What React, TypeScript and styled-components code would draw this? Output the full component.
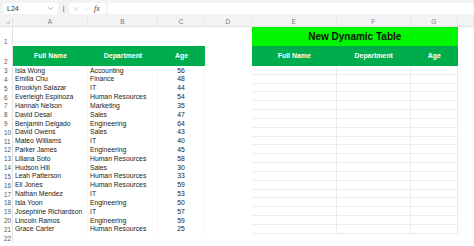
import React from "react";
import styled, { createGlobalStyle } from "styled-components";
import { ChevronDown, X, Check, EllipsisVertical } from "lucide-react";

const GlobalStyle = createGlobalStyle`
  html, body { margin: 0; padding: 0; background: #ffffff; overflow: hidden; }
  body { font-family: "Liberation Sans", Arial, sans-serif; }
  * { box-sizing: border-box; }
`;

const Page = styled.div`
  width: 474px;
  height: 246px;
  display: flex;
  flex-direction: column;
  overflow: hidden;
`;

const FormulaBar = styled.div`
  height: 17px;
  flex: none;
  background: #f3f3f3;
  display: flex;
  align-items: flex-start;
  padding: 3px 0 0 3px;
  gap: 2px;
`;

const Box = styled.div<{ $w?: number; $grow?: boolean }>`
  height: 11px;
  background: #ffffff;
  border-radius: 2px;
  display: flex;
  align-items: center;
  ${(p) => (p.$w ? `width: ${p.$w}px;` : "")}
  ${(p) => (p.$grow ? "flex: 1;" : "")}
`;

const NameBox = styled(Box)`
  justify-content: space-between;
  padding: 0 4px 0 4px;
  font-size: 7px;
  color: #333;
`;

const Dots = styled.div`
  width: 7px;
  height: 11px;
  display: flex;
  align-items: center;
  justify-content: center;
  color: #777;
`;

const FxBox = styled(Box)`
  gap: 3px;
  padding: 0 3px;
  color: #c4c4c4;
`;

const Fx = styled.span`
  font-family: "Liberation Serif", "Times New Roman", serif;
  font-style: italic;
  font-size: 8px;
  color: #444;
`;

const Sheet = styled.div`
  display: grid;
  grid-template-columns: 13px 75px 70px 47px 46.5px 85.5px 73.5px 47.5px 1fr;
  grid-template-rows: 10px 19px 20px repeat(20, 8.83px);
  flex: none;
`;

const ColHead = styled.div`
  background: #f3f3f3;
  border-bottom: 1px solid #e2e2e2;
  border-right: 1px solid #e6e6e6;
  color: #777;
  font-size: 6.5px;
  display: flex;
  align-items: center;
  justify-content: center;
  position: relative;
`;

const Corner = styled.div`
  position: absolute;
  right: 2px;
  bottom: 2px;
  width: 0;
  height: 0;
  border-left: 4px solid transparent;
  border-bottom: 4px solid #d4d4d4;
`;

const RowHead = styled.div`
  border-right: 1px solid #e2e2e2;
  color: #555;
  font-size: 6.3px;
  display: flex;
  align-items: flex-end;
  padding: 0 0 0.5px 4px;
  line-height: 1;
`;

type Kind = "blank" | "data" | "head" | "title" | "grid";

const Cell = styled.div<{ $kind: Kind; $center?: boolean; $span?: number }>`
  display: flex;
  align-items: ${(p) => (p.$kind === "data" ? "flex-end" : "center")};
  justify-content: ${(p) => (p.$center ? "center" : "flex-start")};
  padding-left: ${(p) => (p.$center ? 0 : 2)}px;
  white-space: nowrap;
  overflow: visible;
  line-height: 1;
  ${(p) => (p.$span ? `grid-column: span ${p.$span};` : "")}
  ${(p) => {
    switch (p.$kind) {
      case "head":
        return `background: #00ad4c; color: #ffffff; font-weight: bold; font-size: 6.9px;`;
      case "title":
        return `background: #00f500; color: #111; font-weight: bold; font-size: 10px;`;
      case "data":
        return `color: #1a1a1a; font-size: 6.8px; padding-bottom: 0.5px; border-right: 1px solid #f7f7f7;`;
      case "grid":
        return `border-bottom: 1px solid #ececec; border-right: 1px solid #ececec;`;
      default:
        return ``;
    }
  }}
`;

const people: [string, string, number][] = [
  ["Isla Wong", "Accounting", 56],
  ["Emilia Chu", "Finance", 48],
  ["Brooklyn Salazar", "IT", 44],
  ["Everleigh Espinoza", "Human Resources", 54],
  ["Hannah Nelson", "Marketing", 35],
  ["David Desai", "Sales", 47],
  ["Benjamin Delgado", "Engineering", 64],
  ["David Owens", "Sales", 43],
  ["Mateo Williams", "IT", 40],
  ["Parker James", "Engineering", 45],
  ["Liliana Soto", "Human Resources", 58],
  ["Hudson Hill", "Sales", 30],
  ["Leah Patterson", "Human Resources", 33],
  ["Eli Jones", "Human Resources", 59],
  ["Nathan Mendez", "IT", 53],
  ["Isla Yoon", "Engineering", 50],
  ["Josephine Richardson", "IT", 57],
  ["Lincoln Ramos", "Engineering", 59],
  ["Grace Carter", "Human Resources", 25],
];

const cols = ["A", "B", "C", "D", "E", "F", "G", ""];

export default function App() {
  return (
    <Page>
      <GlobalStyle />
      <FormulaBar>
        <NameBox $w={55}>
          <span>L24</span>
          <ChevronDown size={7} strokeWidth={2} color="#666" />
        </NameBox>
        <Dots>
          <EllipsisVertical size={8} strokeWidth={2.5} />
        </Dots>
        <FxBox $w={37}>
          <X size={8} strokeWidth={1.6} />
          <Check size={8} strokeWidth={1.6} />
          <Fx>fx</Fx>
        </FxBox>
        <Box $grow />
      </FormulaBar>
      <Sheet>
        <ColHead>
          <Corner />
        </ColHead>
        {cols.map((c, i) => (
          <ColHead key={i}>{c}</ColHead>
        ))}

        <RowHead>1</RowHead>
        <Cell $kind="blank" />
        <Cell $kind="blank" />
        <Cell $kind="blank" />
        <Cell $kind="blank" />
        <Cell $kind="title" $center $span={3}>
          New Dynamic Table
        </Cell>
        <Cell $kind="blank" />

        <RowHead>2</RowHead>
        <Cell $kind="head" $center>Full Name</Cell>
        <Cell $kind="head" $center>Department</Cell>
        <Cell $kind="head" $center>Age</Cell>
        <Cell $kind="blank" />
        <Cell $kind="head" $center>Full Name</Cell>
        <Cell $kind="head" $center>Department</Cell>
        <Cell $kind="head" $center>Age</Cell>
        <Cell $kind="blank" />

        {people.map(([name, dept, age], i) => (
          <React.Fragment key={i}>
            <RowHead>{i + 3}</RowHead>
            <Cell $kind="data">{name}</Cell>
            <Cell $kind="data">{dept}</Cell>
            <Cell $kind="data" $center>{age}</Cell>
            <Cell $kind="blank" />
            <Cell $kind="grid" />
            <Cell $kind="grid" />
            <Cell $kind="grid" />
            <Cell $kind="blank" />
          </React.Fragment>
        ))}

        <RowHead>22</RowHead>
        {cols.map((_, i) => (
          <Cell key={i} $kind="blank" />
        ))}
      </Sheet>
    </Page>
  );
}
